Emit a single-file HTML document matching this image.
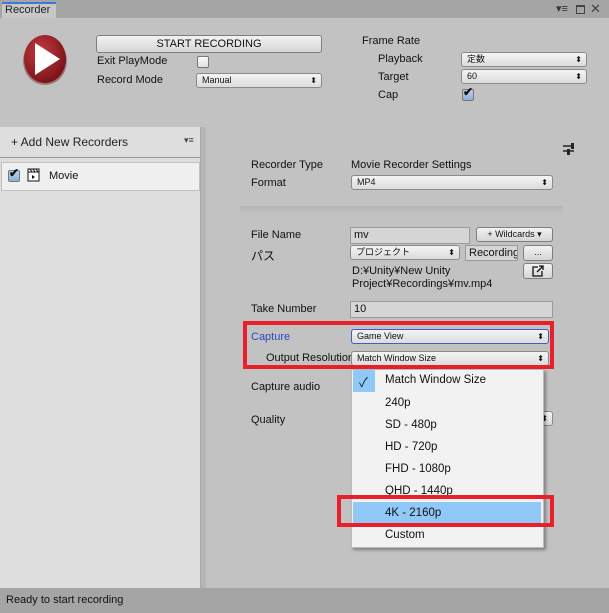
<!DOCTYPE html>
<html><head><meta charset="utf-8"><style>
*{box-sizing:border-box;margin:0;padding:0}
body{width:609px;height:613px;overflow:hidden;background:#c2c2c2;font-family:"Liberation Sans","Noto Sans CJK JP",sans-serif;font-size:11px;color:#111;position:relative}
.a{position:absolute}
.t{position:absolute;white-space:nowrap}
.dd{position:absolute;height:15px;border:1px solid #8a8a8a;border-radius:3px;background:linear-gradient(#f4f4f4,#dcdcdc);font-size:9px;padding-left:5px;line-height:13px;white-space:nowrap;overflow:hidden}
.dd:after{content:"⬍";position:absolute;right:4px;top:0;font-size:8px}
.fld{position:absolute;height:17px;border:1px solid #9a9a9a;background:#d6d6d6;font-size:11px;padding-left:3px;line-height:15px;white-space:nowrap;overflow:hidden}
.btn{position:absolute;border:1px solid #7e7e7e;border-radius:3px;background:linear-gradient(#f2f2f2,#d6d6d6);text-align:center;white-space:nowrap}
.cb{position:absolute;width:12px;height:12px;border:1px solid #777;border-radius:2px;background:linear-gradient(#fafafa,#e0e0e0)}
.red{position:absolute;border:4px solid #e8202a}
.mi{position:absolute;left:385px;font-size:11.5px}
</style></head><body>
<div class="a" style="left:0;top:0;width:609px;height:18px;background:#a5a5a5"></div>
<div class="a" style="left:2px;top:2px;width:54px;height:16px;background:#c8c8c8;border-top:2px solid #3c78d8"></div>
<div class="t" style="left:5px;top:4px;font-size:11px;color:#222">Recorder</div>
<div class="t" style="left:556px;top:2px;font-size:11px;color:#333">▾≡</div>
<div class="a" style="left:576px;top:5px;width:9px;height:9px;border:1px solid #444;border-top-width:2px"></div>
<div class="t" style="left:590px;top:1px;font-size:13px;color:#444">✕</div>
<div class="a" style="left:0;top:18px;width:609px;height:110px;background:#c2c2c2"></div>
<svg class="a" style="left:22px;top:34px" width="46" height="52" viewBox="0 0 46 52">
<defs><radialGradient id="g" cx="40%" cy="35%" r="65%"><stop offset="0" stop-color="#c63a42"/><stop offset="1" stop-color="#7a1418"/></radialGradient></defs>
<ellipse cx="23" cy="27" rx="22" ry="24" fill="#5a1010" opacity=".4"/>
<ellipse cx="23" cy="25" rx="21" ry="24" fill="url(#g)"/>
<path d="M13 9 L38 25 L13 41 Z" fill="#fff"/></svg>
<div class="btn" style="left:96px;top:35px;width:226px;height:18px;font-size:11px;line-height:16px">START RECORDING</div>
<div class="t" style="left:97px;top:55px">Exit PlayMode</div>
<div class="cb" style="left:197px;top:56px"></div>
<div class="t" style="left:97px;top:74px">Record Mode</div>
<div class="dd" style="left:196px;top:73px;width:126px">Manual</div>
<div class="t" style="left:362px;top:35px">Frame Rate</div>
<div class="t" style="left:378px;top:53px">Playback</div>
<div class="dd" style="left:461px;top:52px;width:126px">定数</div>
<div class="t" style="left:378px;top:71px">Target</div>
<div class="dd" style="left:461px;top:69px;width:126px">60</div>
<div class="t" style="left:378px;top:89px">Cap</div>
<div class="cb" style="left:462px;top:89px;background:linear-gradient(#bcd0ea,#8fb0dc)"></div>
<div class="t" style="left:463px;top:85px;font-size:12px;font-weight:bold">✔</div>
<div class="a" style="left:0;top:127px;width:201px;height:461px;background:#dedede;border-right:1px solid #aaa"></div>
<div class="t" style="left:11px;top:135px;font-size:12px;color:#222">+ Add New Recorders</div>
<div class="t" style="left:184px;top:135px;font-size:9px;color:#444">▾≡</div>
<div class="a" style="left:0;top:157px;width:201px;height:1px;background:#9a9a9a"></div>
<div class="a" style="left:1px;top:162px;width:199px;height:29px;background:#f0f0f0;border:1px solid #c0c0c0"></div>
<div class="cb" style="left:8px;top:170px;background:linear-gradient(#bcd0ea,#8fb0dc)"></div>
<div class="t" style="left:9px;top:166px;font-size:12px;font-weight:bold">✔</div>
<svg class="a" style="left:27px;top:168px" width="13" height="14" viewBox="0 0 13 14"><rect x="1" y="1" width="11" height="12" fill="#fff" stroke="#111"/><path d="M1 4 H12 M3 1 L5 4 M6 1 L8 4 M9 1 L11 4" stroke="#111"/><path d="M5 7 L8 9 L5 11Z" fill="#111"/></svg>
<div class="t" style="left:49px;top:170px">Movie</div>
<div class="a" style="left:201px;top:127px;width:5px;height:461px;background:#b5b5b5"></div>
<svg class="a" style="left:563px;top:143px" width="12" height="12" viewBox="0 0 12 12"><path d="M0 3H11M0 8H11" stroke="#222" stroke-width="1.5"/><rect x="8" y="0" width="3" height="6" fill="#222"/><rect x="4" y="6" width="3" height="6" fill="#222"/></svg>
<div class="t" style="left:251px;top:159px">Recorder Type</div>
<div class="t" style="left:351px;top:159px">Movie Recorder Settings</div>
<div class="t" style="left:251px;top:177px">Format</div>
<div class="dd" style="left:351px;top:175px;width:202px">MP4</div>
<div class="a" style="left:240px;top:206px;width:323px;height:8px;background:linear-gradient(#b4b4b4,#c2c2c2)"></div>
<div class="t" style="left:251px;top:229px">File Name</div>
<div class="fld" style="left:350px;top:227px;width:120px">mv</div>
<div class="btn" style="left:476px;top:227px;width:77px;height:15px;font-size:9px;line-height:13px">+ Wildcards ▾</div>
<div class="t" style="left:251px;top:247px;font-size:12px">パス</div>
<div class="dd" style="left:350px;top:245px;width:110px">プロジェクト</div>
<div class="fld" style="left:465px;top:245px;width:53px;height:16px;overflow:hidden">Recording</div>
<div class="btn" style="left:523px;top:245px;width:30px;height:16px;font-size:9px;line-height:12px">...</div>
<div class="t" style="left:352px;top:265px">D:¥Unity¥New Unity</div>
<div class="t" style="left:352px;top:278px">Project¥Recordings¥mv.mp4</div>
<div class="btn" style="left:523px;top:263px;width:30px;height:16px"><svg width="14" height="13" viewBox="0 0 14 13" style="margin-top:1px"><path d="M7 2H2V11H11V6" fill="none" stroke="#111" stroke-width="1.3"/><path d="M6 7L12 1M8 1H12V5" fill="none" stroke="#111" stroke-width="1.3"/></svg></div>
<div class="t" style="left:251px;top:303px">Take Number</div>
<div class="fld" style="left:350px;top:301px;width:203px">10</div>
<div class="t" style="left:251px;top:331px;color:#2a49c8">Capture</div>
<div class="dd" style="left:351px;top:329px;width:198px;border-color:#3a5fc8">Game View</div>
<div class="t" style="left:266px;top:352px">Output Resolution</div>
<div class="dd" style="left:351px;top:351px;width:198px">Match Window Size</div>
<div class="red" style="left:243px;top:321px;width:311px;height:48px"></div>
<div class="t" style="left:251px;top:381px">Capture audio</div>
<div class="t" style="left:251px;top:414px">Quality</div>
<div class="dd" style="left:530px;top:411px;width:23px"></div>
<div class="a" style="left:351px;top:369px;width:193px;height:179px;background:#f2f2f2;border:1px solid #bbb;box-shadow:2px 2px 3px rgba(0,0,0,.35)"></div>
<div class="a" style="left:353px;top:370px;width:22px;height:22px;background:#90c8f8"></div>
<div class="t" style="left:359px;top:372px;font-size:13px;color:#222">✓</div>
<div class="mi t" style="top:374px">Match Window Size</div>
<div class="mi t" style="top:397px">240p</div>
<div class="mi t" style="top:419px">SD - 480p</div>
<div class="mi t" style="top:441px">HD - 720p</div>
<div class="mi t" style="top:463px">FHD - 1080p</div>
<div class="mi t" style="top:485px">QHD - 1440p</div>
<div class="a" style="left:353px;top:502px;width:188px;height:22px;background:#90c8f8"></div>
<div class="mi t" style="top:507px">4K - 2160p</div>
<div class="mi t" style="top:529px">Custom</div>
<div class="red" style="left:337px;top:495px;width:217px;height:32px"></div>
<div class="a" style="left:0;top:588px;width:609px;height:25px;background:#a5a5a5"></div>
<div class="t" style="left:6px;top:594px">Ready to start recording</div>
</body></html>
